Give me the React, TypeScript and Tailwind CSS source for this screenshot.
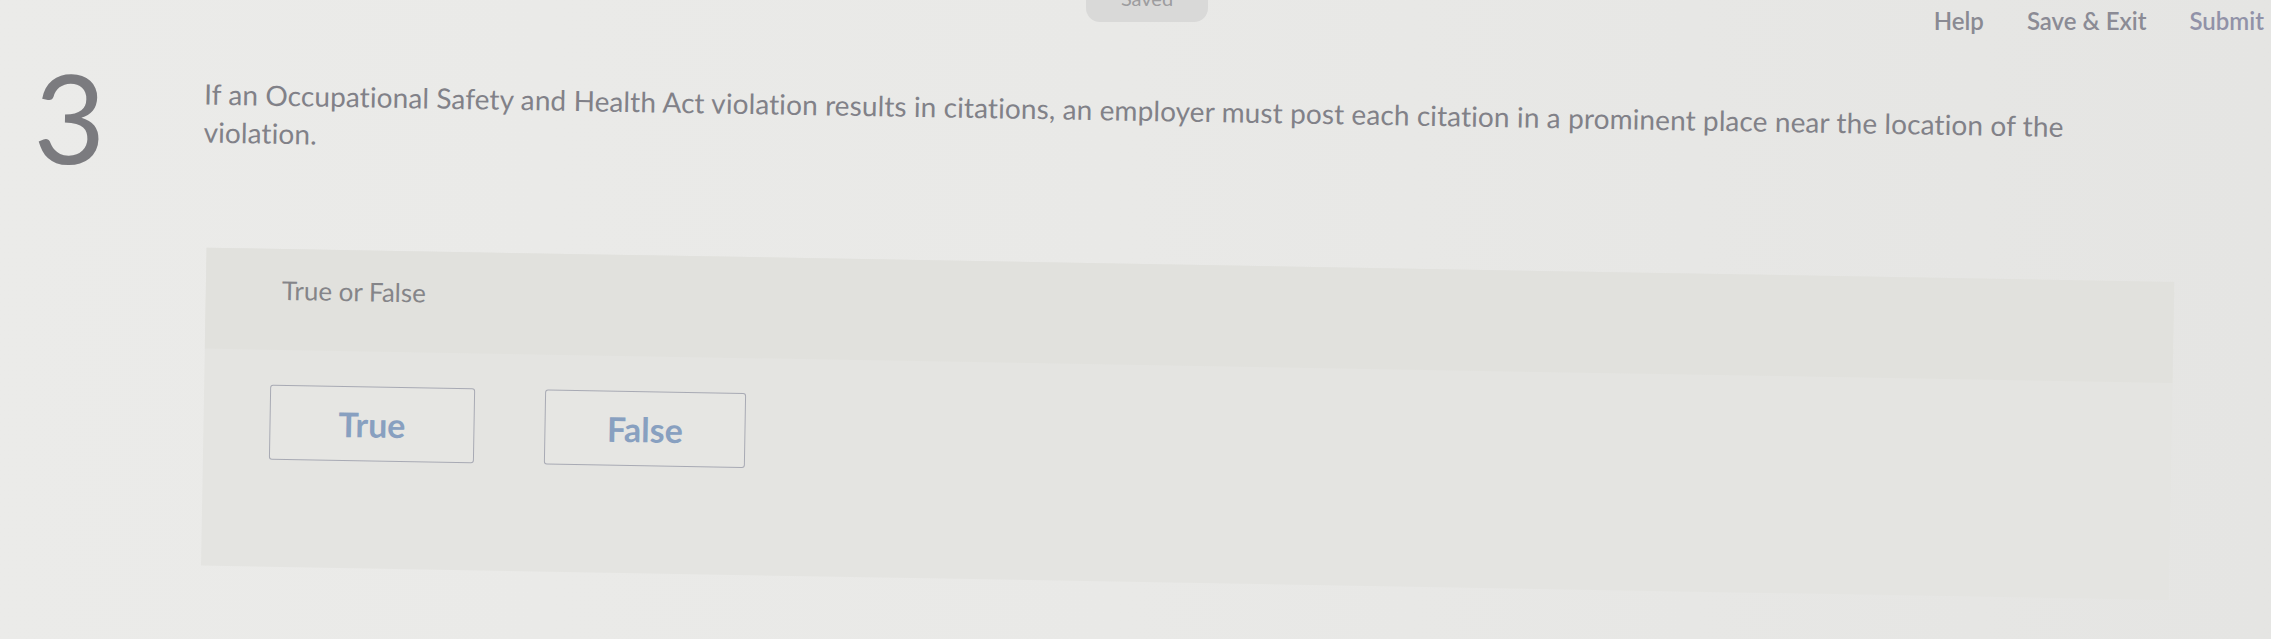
import React from "react";

const navLinks = [
  { label: "Help", cls: "text-[#8a8a93]" },
  { label: "Save & Exit", cls: "text-[#8b8b95]" },
  { label: "Submit", cls: "text-[#9192a8]" },
];

function AnswerButton({ label, width }: { label: string; width: string }) {
  return (
    <button
      type="button"
      className={`${width} h-[75px] rounded-[3px] border-[1.5px] border-[#a8aab4] bg-[#e6e6e3] flex items-center justify-center text-[34px] font-bold leading-none text-[#88a0c0]`}
    >
      {label}
    </button>
  );
}

export default function App() {
  return (
    <div className="relative w-[2271px] h-[639px] overflow-hidden bg-linear-to-r from-[#ebebe9] via-[#e9e9e7] to-[#e5e5e3] font-['Lato','Noto_Sans',sans-serif]">
      {/* autosave status chip tucked under the top edge */}
      <div className="absolute left-[1086px] top-[-20px] h-[42px] w-[122px] rounded-[14px] bg-[#d9d9d8] flex justify-center pt-[8px]">
        <span className="text-[20px] leading-[20px] text-[#9d9d9f]">Saved</span>
      </div>

      {/* top navigation */}
      <header className="h-[50px] flex justify-end items-start pt-[6px] pr-[7px] gap-[43px]">
        {navLinks.map((l) => (
          <a key={l.label} className={`text-[24px] font-semibold leading-[29px] ${l.cls}`}>
            {l.label}
          </a>
        ))}
      </header>

      {/* question body */}
      <main className="origin-top-left rotate-[1deg] pl-[35px] flex flex-col">
        <div className="flex items-start pt-[3px]">
          <div className="w-[170px] shrink-0 text-[124px] font-normal leading-none text-[#7b7b7f]">3</div>
          <p className="mt-[18px] w-[1880px] text-[28px] leading-[38px] tracking-[0.1px] text-[#818188]">
            If an Occupational Safety and Health Act violation results in citations, an employer must post each
            citation in a prominent place near the location of the violation.
          </p>
        </div>

        <section className="ml-[175px] mt-[67px] w-[1968px] h-[318px] bg-[#e4e4e1] flex flex-col">
          <div className="h-[101px] bg-[#e1e1dd] pl-[76px] pt-[26px]">
            <span className="text-[26px] leading-[31px] text-[#858589]">True or False</span>
          </div>
          <div className="mt-[35px] pl-[66px] flex gap-[70px]">
            <AnswerButton label="True" width="w-[205px]" />
            <AnswerButton label="False" width="w-[201px]" />
          </div>
        </section>
      </main>
    </div>
  );
}
